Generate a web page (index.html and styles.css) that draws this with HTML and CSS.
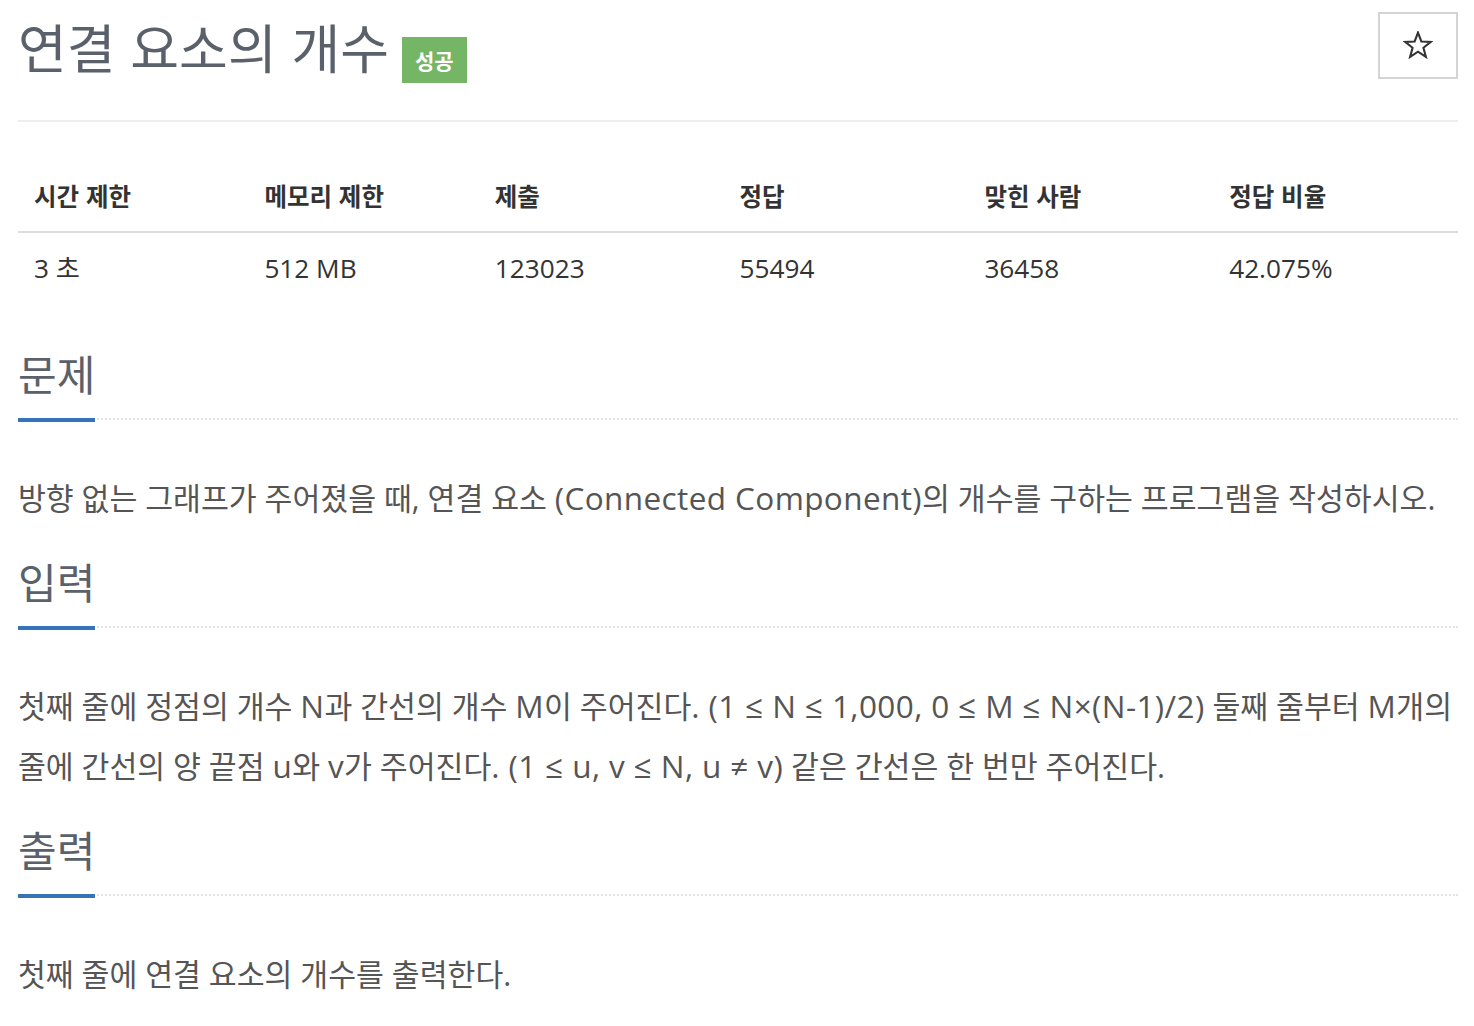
FILE: index.html
```html
<!DOCTYPE html>
<html lang="ko">
<head>
<meta charset="utf-8">
<title>연결 요소의 개수</title>
<link rel="stylesheet" href="styles.css">
</head>
<body>
<div class="container">
  <div class="page-header">
    <h1 class="title">연결 요소의 개수</h1>
    <span class="badge">성공</span>
    <button class="star-btn" type="button" aria-label="즐겨찾기">
      <svg width="30" height="28" viewBox="0 0 28 27" aria-hidden="true">
        <path d="M14 1.5 L17.23 10.05 L26.36 10.48 L19.23 16.2 L21.64 25.02 L14 20 L6.36 25.02 L8.77 16.2 L1.64 10.48 L10.77 10.05 Z" fill="none" stroke="#333" stroke-width="2" stroke-linejoin="miter"/>
      </svg>
    </button>
  </div>

  <table class="info">
    <thead>
      <tr>
        <th class="w16">시간 제한</th>
        <th class="w16">메모리 제한</th>
        <th class="w17">제출</th>
        <th class="w17">정답</th>
        <th class="w17">맞힌 사람</th>
        <th class="w17">정답 비율</th>
      </tr>
    </thead>
    <tbody>
      <tr>
        <td>3 초</td>
        <td>512 MB</td>
        <td>123023</td>
        <td>55494</td>
        <td>36458</td>
        <td>42.075%</td>
      </tr>
    </tbody>
  </table>

  <section class="section first">
    <h2 class="headline"><span>문제</span></h2>
    <p class="text">방향 없는 그래프가 주어졌을 때, 연결 요소 <span class="lat">(Connected Component)</span>의 개수를 구하는 프로그램을 작성하시오.</p>
  </section>

  <section class="section">
    <h2 class="headline"><span>입력</span></h2>
    <p class="text">첫째 줄에 정점의 개수 <span class="lat">N</span>과 간선의 개수 <span class="lat">M</span>이 주어진다<span class="lat">. (1 ≤ N ≤ 1,000, 0 ≤ M ≤ N×(N-1)/2)</span> 둘째 줄부터 <span class="lat">M</span>개의 줄에 간선의 양 끝점 <span class="lat">u</span>와 <span class="lat">v</span>가 주어진다<span class="lat">. (1 ≤ u, v ≤ N, u ≠ v)</span> 같은 간선은 한 번만 주어진다.</p>
  </section>

  <section class="section">
    <h2 class="headline"><span>출력</span></h2>
    <p class="text">첫째 줄에 연결 요소의 개수를 출력한다.</p>
  </section>
</div>
</body>
</html>
```

FILE: styles.css
```css
html, body {
  margin: 0;
  padding: 0;
  background: #fff;
}

body {
  font-family: "Open Sans", "Noto Sans CJK KR", sans-serif;
  color: #555;
}

.container {
  padding: 0 16px 0 18px;
}

.page-header {
  display: flex;
  align-items: flex-start;
  height: 120px;
  border-bottom: 2px solid #eee;
}

.title {
  margin: 16px 0 0;
  font-family: "Noto Sans CJK KR", sans-serif;
  font-weight: 400;
  font-size: 53px;
  line-height: 60px;
  color: #5a616b;
}

.badge {
  margin: 37px 0 0 13px;
  height: 46px;
  padding: 0 13px;
  background: #74b566;
  color: #fff;
  font-family: "Noto Sans CJK KR", sans-serif;
  font-weight: 700;
  font-size: 21px;
  line-height: 46px;
}

.star-btn {
  margin: 12px 0 0 auto;
  width: 80px;
  height: 67px;
  padding: 0;
  border: 2px solid #d4d4d4;
  background: #fff;
  display: flex;
  align-items: center;
  justify-content: center;
}

.star-btn svg {
  display: block;
  margin-top: -2px;
}

.info {
  width: 100%;
  margin-top: 39px;
  border-collapse: collapse;
  color: #333;
}

.info th,
.info td {
  text-align: left;
  padding: 17px 16px;
  line-height: 36px;
}

.info th {
  font-family: "Noto Sans CJK KR", sans-serif;
  font-weight: 700;
  font-size: 24.5px;
  border-bottom: 2px solid #ddd;
}

.info td {
  font-size: 26.2px;
}

.w16 { width: 16%; }
.w17 { width: 17%; }

.section {
  margin-top: 28px;
}

.section.first {
  margin-top: 46px;
}

.headline {
  display: flex;
  margin: 0 0 49px;
  border-bottom: 2px dotted #e3e3ea;
  font-family: "Noto Sans CJK KR", sans-serif;
  font-weight: 400;
  font-size: 42px;
  line-height: 48px;
  color: #5a616b;
}

.headline span {
  padding-bottom: 21px;
  margin-bottom: -4px;
  border-bottom: 4px solid #3574b9;
}

.text {
  margin: 0;
  font-size: 30.3px;
  line-height: 60px;
  color: #555;
  word-break: keep-all;
}

.lat {
  font-family: "Open Sans", "Liberation Sans", sans-serif;
  font-size: 31.5px;
  letter-spacing: 0.4px;
  line-height: 1;
}
```
